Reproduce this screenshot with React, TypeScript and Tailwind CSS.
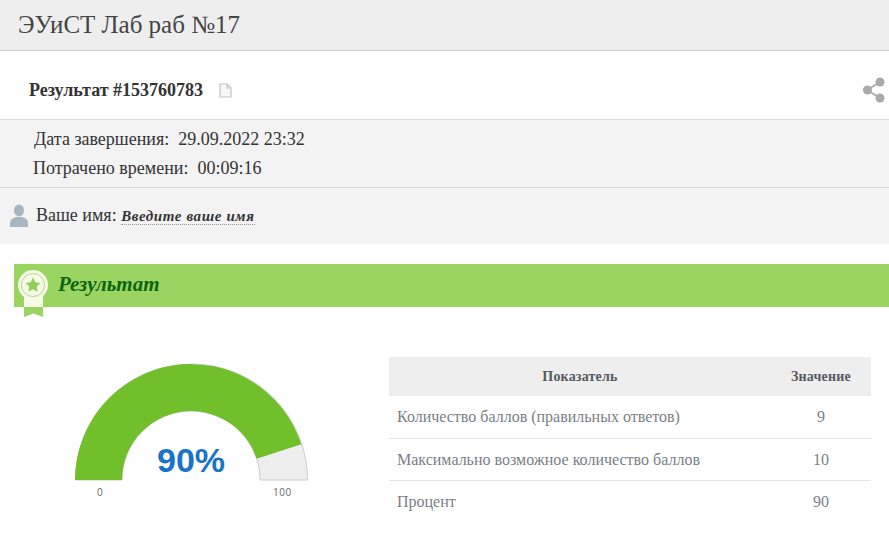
const serif = "font-['Liberation_Serif',serif]";

function CopyIcon() {
  return (
    <svg width="13" height="15" viewBox="0 0 13 15" fill="none" stroke="#c4c4c4" strokeWidth="1.2">
      <path d="M1 1h7l4 4v9H1z" fill="#f7f7f7" />
      <path d="M8 1v4h4" />
    </svg>
  );
}

function ShareIcon() {
  return (
    <svg width="24" height="28" viewBox="0 0 24 28" fill="#aaaaaa" stroke="#aaaaaa">
      <path d="M5 14L18 6M5 14l13 8" strokeWidth="1.6" />
      <circle cx="5.5" cy="14" r="4.5" stroke="none" />
      <circle cx="18" cy="6" r="4.5" stroke="none" />
      <circle cx="18" cy="22" r="4.5" stroke="none" />
    </svg>
  );
}

function UserIcon() {
  return (
    <svg width="18" height="23" viewBox="0 0 18 23" fill="#a9b6c1">
      <ellipse cx="9" cy="6.5" rx="5" ry="6" />
      <path d="M0 23v-4c0-3.500 3-5 6-6h6c3 1 6 2.500 6 6v4z" />
    </svg>
  );
}

function Badge() {
  return (
    <svg width="32" height="54" viewBox="0 0 32 54">
      <path d="M7 24h19v19H7z" fill="#f6fbe6" />
      <path d="M7 43h19v10l-9.500-3.500L7 53z" fill="#9ad562" />
      <circle cx="16" cy="21" r="15" fill="#f6fbe6" />
      <circle cx="16" cy="21" r="11.500" fill="none" stroke="#a9c98a" strokeWidth="0.8" />
      <path d="M16 13.500l2.300 4.800 5.200.7-3.800 3.600 1 5.200-4.700-2.600-4.700 2.600 1-5.200-3.800-3.600 5.200-.7z" fill="#8fce58" />
    </svg>
  );
}

function Gauge() {
  return (
    <div className="relative h-[140px] w-[260px]">
      <svg width="260" height="140" viewBox="0 0 260 140">
        <path d="M14.500 124A116 116 0 0 1 246.500 124H199A69 69 0 0 0 61 124z" fill="#eeeeee" stroke="#cccccc" strokeWidth="1" />
        <path d="M14 124A116 116 0 0 1 240.300 88.200L195.600 102.700A69 69 0 0 0 61 124z" fill="#70bf2b" />
      </svg>
      <span className="absolute left-[96px] top-[84px] font-['Liberation_Sans',sans-serif] text-[34px] leading-[40px] font-bold text-[#1a73c9]">
        90%
      </span>
      <span className="absolute left-[36px] top-[129px] font-['Open_Sans',sans-serif] text-[10px] leading-[14px] tracking-[0.5px] text-[#666666]">
        0
      </span>
      <span className="absolute left-[212px] top-[129px] font-['Open_Sans',sans-serif] text-[10px] leading-[14px] tracking-[0.5px] text-[#666666]">
        100
      </span>
    </div>
  );
}

const rows = [
  { label: 'Количество баллов (правильных ответов)', value: '9' },
  { label: 'Максимально возможное количество баллов', value: '10' },
  { label: 'Процент', value: '90' },
];

export default function App() {
  return (
    <div className={`${serif} h-[538px] w-[889px] overflow-hidden bg-white text-[#333333]`}>
      <header className="flex h-[51px] items-center border-b border-[#cccccc] bg-[#eeeeee] pl-[18px]">
        <h1 className="text-[25px] leading-[50px] font-normal text-[#444444]">ЭУиСТ Лаб раб №17</h1>
      </header>

      <div className="flex h-[69px] items-center justify-between border-b border-[#dddddd] pl-[29px] pr-[3px] pt-[10px]">
        <div className="flex items-center gap-[16px]">
          <span className="text-[18px] font-bold">Результат #153760783</span>
          <CopyIcon />
        </div>
        <ShareIcon />
      </div>

      <div className="h-[68px] border-b border-[#d9d9d9] bg-[#f3f3f4] pl-[33px] pt-[5px] text-[18px] leading-[29px]">
        <p className="whitespace-pre pl-px">Дата завершения:  29.09.2022 23:32</p>
        <p className="whitespace-pre">Потрачено времени:  00:09:16</p>
      </div>

      <div className="flex h-[56px] items-center gap-[8px] bg-[#f3f3f4] pb-[2px] pl-[10px]">
        <UserIcon />
        <p className="text-[18px]">
          Ваше имя:{' '}
          <span className="border-b border-dotted border-[#999999] text-[15px] font-bold italic tracking-[0.6px]">
            Введите ваше имя
          </span>
        </p>
      </div>

      <div className="relative ml-[14px] mt-[20px] flex h-[43px] items-center bg-[#9ad562] pb-px pl-[44px]">
        <span className="text-[21px] font-bold italic text-[#0c6511]">Результат</span>
        <div className="absolute left-[3px] top-0">
          <Badge />
        </div>
      </div>

      <div className="mt-[50px] flex items-start">
        <div className="ml-[61px] mt-[-1px] w-[328px]">
          <Gauge />
        </div>
        <table className="w-[482px] border-collapse text-[16px] text-[#7a7f85]">
          <thead>
            <tr className="h-[39px] bg-[#eeeeee] text-[14px] font-bold tracking-[0.2px] text-[#555a5f]">
              <th className="font-bold">Показатель</th>
              <th className="w-[100px] font-bold">Значение</th>
            </tr>
          </thead>
          <tbody>
            {rows.map((row, i) => (
              <tr key={row.label} className={i < 2 ? 'h-[42px] border-b border-[#e5e5e5]' : 'h-[42px]'}>
                <td className={i > 0 ? 'pl-[8px] pt-[2px]' : 'pl-[8px]'}>{row.label}</td>
                <td className={i > 0 ? 'pt-[2px] text-center' : 'text-center'}>{row.value}</td>
              </tr>
            ))}
          </tbody>
        </table>
      </div>
    </div>
  );
}
